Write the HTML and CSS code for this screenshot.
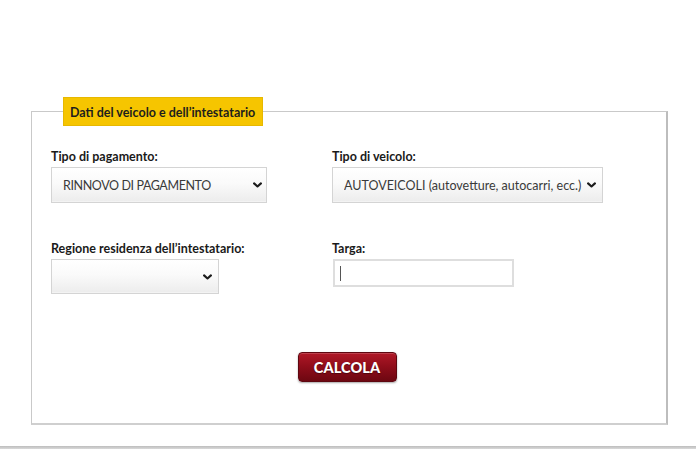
FILE: index.html
```html
<!DOCTYPE html>
<html lang="it">
<head>
<meta charset="utf-8">
<title>Calcolo bollo</title>
<link rel="stylesheet" href="styles.css">
</head>
<body>
<main class="page">
  <fieldset class="box">
    <legend class="legend">Dati del veicolo e dell’intestatario</legend>
    <div class="grid">
      <div class="field">
        <label class="label" for="tipo-pag">Tipo di pagamento:</label>
        <div class="select-wrap w1">
          <select id="tipo-pag" class="select narrow"><option>RINNOVO DI PAGAMENTO</option></select>
          <svg class="chev" viewBox="0 0 10 6" width="9" height="6"><path d="M1.2 1.2 L5 4.6 L8.8 1.2" fill="none" stroke="#1c1c1c" stroke-width="2.4" stroke-linecap="round" stroke-linejoin="round"/></svg>
        </div>
      </div>
      <div class="field">
        <label class="label" for="tipo-vei">Tipo di veicolo:</label>
        <div class="select-wrap w2">
          <select id="tipo-vei" class="select"><option>AUTOVEICOLI (autovetture, autocarri, ecc.)</option></select>
          <svg class="chev" viewBox="0 0 10 6" width="9" height="6"><path d="M1.2 1.2 L5 4.6 L8.8 1.2" fill="none" stroke="#1c1c1c" stroke-width="2.4" stroke-linecap="round" stroke-linejoin="round"/></svg>
        </div>
      </div>
      <div class="field row2">
        <label class="label" for="regione">Regione residenza dell’intestatario:</label>
        <div class="select-wrap w3">
          <select id="regione" class="select"><option></option></select>
          <svg class="chev" viewBox="0 0 10 6" width="9" height="6"><path d="M1.2 1.2 L5 4.6 L8.8 1.2" fill="none" stroke="#1c1c1c" stroke-width="2.4" stroke-linecap="round" stroke-linejoin="round"/></svg>
        </div>
      </div>
      <div class="field row2">
        <label class="label" for="targa">Targa:</label>
        <div class="input" id="targa"><span class="caret"></span></div>
      </div>
    </div>
    <div class="actions">
      <button class="btn" type="button">CALCOLA</button>
    </div>
  </fieldset>
  <div class="footer-line"></div>
</main>
</body>
</html>
```
FILE: styles.css
```css
html, body {
  margin: 0;
  padding: 0;
  background: #ffffff;
  overflow: hidden;
}
body {
  font-family: Lato, "Open Sans", "Liberation Sans", sans-serif;
  color: #222;
}
.page {
  padding-top: 97px;
}
.box {
  margin: 0 0 0 31px;
  width: 637px;
  box-sizing: border-box;
  height: 328px;
  padding: 0;
  border: 1px solid #c9c9c9;
  border-right: 2px solid #bdbdbd;
  border-bottom: 2px solid #cfcfcf;
}
.legend {
  margin-left: 31px;
  padding: 0 7px 0 6px;
  height: 29px;
  line-height: 29px;
  background: #f6c500;
  border: 1px solid #e7b800;
  box-sizing: border-box;
  font-weight: 700;
  font-size: 12.5px;
  color: #1d1d1d;
}
.grid {
  display: grid;
  grid-template-columns: 281px 1fr;
  row-gap: 38px;
  padding: 23px 0 0 19px;
  align-items: start;
}
.label {
  display: block;
  font-weight: 700;
  font-size: 12.5px;
  line-height: 16px;
  height: 16px;
  margin-bottom: 2px;
  color: #1a1a1a;
}
.select-wrap {
  position: relative;
  height: 36px;
}
.w1 { width: 216px; }
.w2 { width: 271px; }
.w3 { width: 168px; height: 35px; }
.select {
  -webkit-appearance: none;
  appearance: none;
  width: 100%;
  height: 100%;
  box-sizing: border-box;
  border: 1px solid #d4d4d4;
  border-radius: 0;
  background: linear-gradient(#ffffff 0%, #fafafa 45%, #ececec 100%);
  box-shadow: inset 0 -1px 0 #f3f3f3;
  padding: 0 20px 0 11px;
  font-family: Lato, "Open Sans", "Liberation Sans", sans-serif;
  font-size: 12.5px;
  color: #3a3a3a;
  outline: none;
}
.select.narrow {
  font-size: 12.5px;
  letter-spacing: -0.4px;
}
.chev {
  position: absolute;
  right: 5px;
  top: 50%;
  margin-top: -3px;
  pointer-events: none;
}
.w2 .chev, .w3 .chev { right: 7px; }
.input {
  width: 181px;
  height: 28px;
  box-sizing: border-box;
  border: 2px solid #dedede;
  background: #fff;
  margin-left: 1px;
  display: flex;
  align-items: center;
  padding-left: 5px;
}
.caret {
  display: block;
  width: 1px;
  height: 15px;
  background: #555;
}
.actions {
  display: flex;
  justify-content: center;
  padding-top: 58px;
}
.btn {
  width: 99px;
  height: 30px;
  border: 1px solid #5e0710;
  border-radius: 4px;
  background: linear-gradient(#b01827 0%, #8e0d1a 50%, #6d0711 100%);
  box-shadow: 0 1px 2px rgba(0,0,0,0.35), inset 0 1px 0 rgba(255,255,255,0.18);
  color: #fff;
  font-family: Lato, "Open Sans", "Liberation Sans", sans-serif;
  font-weight: 900;
  font-size: 14.5px;
  letter-spacing: 0.1px;
  padding: 0;
  margin-right: 4px;
  text-shadow: 0 1px 1px rgba(0,0,0,0.4);
}
.footer-line {
  margin-top: 21px;
  height: 3px;
  background: linear-gradient(#bdbdbd, #d9d9d9);
}
```
